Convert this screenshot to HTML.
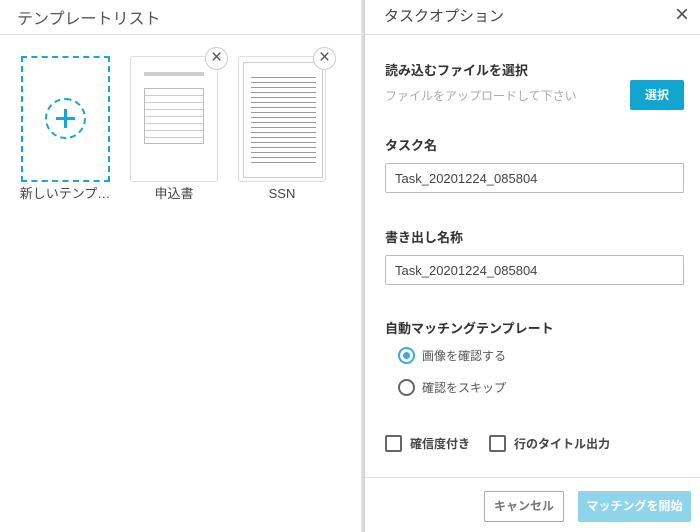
<!DOCTYPE html>
<html><head><meta charset="utf-8"><style>
*{box-sizing:border-box;margin:0;padding:0}
body{width:700px;height:532px;background:#fff;font-family:"Liberation Sans","Noto Sans CJK JP",sans-serif;position:relative;overflow:hidden;color:#333}
.a{position:absolute}
.hline{position:absolute;height:1px;background:#ddd}
.card{position:absolute;top:56px;width:88px;height:126px;border:1px solid #ddd;border-radius:3px;background:#fff}
.x{position:absolute;width:23px;height:23px;border-radius:50%;border:1px solid #ccc;background:#fff;font-size:19px;line-height:20px;text-align:center;color:#555}
.lbl{position:absolute;top:186px;font-size:13px;line-height:16px;color:#444;text-align:center;width:100px}
.b{font-weight:bold;font-size:13px;color:#333}
.inp{position:absolute;left:385px;width:299px;height:30px;border:1px solid #bbb;border-radius:2px;font-size:13px;color:#444;padding:7px 9px}
.rad{position:absolute;left:398px;width:17px;height:17px;border-radius:50%;border:2px solid #666}
.chk{position:absolute;top:435px;width:17px;height:17px;border:2px solid #666;border-radius:2px}
</style></head><body>
<div class="a" style="left:17px;top:5px;font-size:16px;color:#555">テンプレートリスト</div>
<div class="hline" style="left:0;top:34px;width:362px"></div>
<div class="a" style="left:21px;top:56px;width:89px;height:126px;border:2px dashed #1aa5d2"></div>
<div class="a" style="left:45px;top:98px;width:41px;height:41px;border:2px dashed #1aa5d2;border-radius:50%"></div>
<div class="a" style="left:56px;top:117px;width:19px;height:3px;background:#1aa5d2"></div>
<div class="a" style="left:64px;top:109px;width:3px;height:19px;background:#1aa5d2"></div>
<div class="lbl" style="left:15px">新しいテンプ…</div>
<div class="card" style="left:130px">
 <div class="a" style="left:13px;top:15px;width:60px;height:4px;background:#ccc"></div>
 <div class="a" style="left:13px;top:31px;width:60px;height:56px;border:1px solid #bbb;background:repeating-linear-gradient(#fff 0 6px,#ccc 6px 7px)"></div>
</div>
<div class="x" style="left:205px;top:47px">×</div>
<div class="lbl" style="left:124px">申込書</div>
<div class="card" style="left:238px">
 <div class="a" style="left:4px;top:5px;width:80px;height:116px;border:1px solid #ccc"></div>
 <div class="a" style="left:12px;top:18px;width:65px;height:88px;background:repeating-linear-gradient(#fff 0 2px,#999 2px 3px,#fff 3px 5px)"></div>
</div>
<div class="x" style="left:313px;top:47px">×</div>
<div class="lbl" style="left:232px">SSN</div>

<div class="a" style="left:361px;top:0;width:4px;height:532px;background:linear-gradient(90deg,#e6e6e6,#d0d0d0)"></div>
<div class="a" style="left:384px;top:5px;font-size:15px;color:#444">タスクオプション</div>
<div class="a" style="left:675px;top:1px;font-size:24px;color:#555">×</div>
<div class="hline" style="left:365px;top:34px;width:335px"></div>
<div class="a b" style="left:385px;top:60px">読み込むファイルを選択</div>
<div class="a" style="left:385px;top:87px;font-size:12px;color:#aaa">ファイルをアップロードして下さい</div>
<div class="a" style="left:630px;top:80px;width:54px;height:30px;background:#12a5d0;border-radius:2px;color:#fff;font-size:12px;font-weight:bold;text-align:center;line-height:30px">選択</div>
<div class="a b" style="left:385px;top:135px">タスク名</div>
<div class="inp" style="top:163px">Task_20201224_085804</div>
<div class="a b" style="left:385px;top:227px">書き出し名称</div>
<div class="inp" style="top:255px">Task_20201224_085804</div>
<div class="a b" style="left:385px;top:318px">自動マッチングテンプレート</div>
<div class="rad" style="top:347px;border-color:#3ea8e5"><div class="a" style="left:3px;top:3px;width:7px;height:7px;border-radius:50%;background:#3ea8e5"></div></div>
<div class="a" style="left:422px;top:347px;font-size:12px;color:#555">画像を確認する</div>
<div class="rad" style="top:379px"></div>
<div class="a" style="left:422px;top:379px;font-size:12px;color:#555">確認をスキップ</div>
<div class="chk" style="left:385px"></div>
<div class="a" style="left:410px;top:435px;font-size:12px;font-weight:bold;color:#444">確信度付き</div>
<div class="chk" style="left:489px"></div>
<div class="a" style="left:514px;top:435px;font-size:12px;font-weight:bold;color:#444">行のタイトル出力</div>
<div class="hline" style="left:365px;top:477px;width:335px"></div>
<div class="a" style="left:484px;top:491px;width:80px;height:31px;border:1px solid #aaa;border-radius:2px;font-size:12px;font-weight:bold;color:#777;text-align:center;line-height:29px">キャンセル</div>
<div class="a" style="left:578px;top:491px;width:113px;height:31px;background:#8fd4ea;border-radius:2px;font-size:12px;font-weight:bold;color:#fff;text-align:center;line-height:31px">マッチングを開始</div>
</body></html>
